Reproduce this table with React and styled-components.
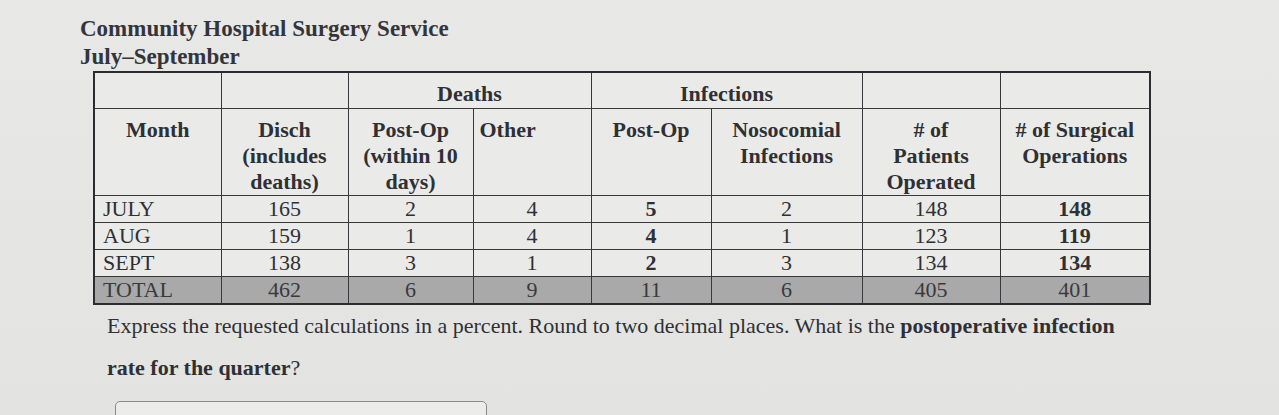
import React from "react";
import styled, { createGlobalStyle } from "styled-components";

const Global = createGlobalStyle`
  html, body { margin: 0; padding: 0; background: #e4e5e3; }
  body { font-family: "Liberation Serif", "Times New Roman", serif; color: #2f3034; overflow: hidden; }
`;

const Page = styled.div`
  width: 1279px;
  height: 415px;
  padding: 15px 0 0 80px;
  box-sizing: border-box;
  background: linear-gradient(180deg, #e8e9e7 0%, #e3e4e2 100%);
`;

const Title = styled.div`
  font-size: 23px;
  font-weight: bold;
  line-height: 28px;
  color: #34353a;
`;

const Table = styled.table`
  margin: 0 0 0 13px;
  border-collapse: collapse;
  table-layout: fixed;
  width: 1056px;
  background: #eaebe9;
  border: 2px solid #2c2c30;
`;

const Cell = styled.td`
  border: 1.5px solid #38383c;
  padding: ${(p) => (p.$head ? "8px 6px 0" : "0 8px")};
  height: ${(p) => p.$h}px;
  box-sizing: border-box;
  font-size: 22px;
  line-height: ${(p) => (p.$head ? "26px" : "24px")};
  font-weight: ${(p) => (p.$bold ? "bold" : "normal")};
  text-align: ${(p) => p.$align || "center"};
  vertical-align: ${(p) => (p.$head ? "top" : "middle")};
  background: ${(p) => (p.$total ? "#a8a9a8" : "transparent")};
  color: ${(p) => (p.$total ? "#3a3a3e" : "#2f3034")};
  white-space: nowrap;
`;

const Question = styled.div`
  margin: 0 0 0 27px;
  width: 1040px;
  font-size: 22px;
  line-height: 42px;
  color: #2f3034;
`;

const Phrase = styled.span`
  font-weight: ${(p) => (p.$bold ? "bold" : "normal")};
`;

const AnswerBox = styled.div`
  margin: 12px 0 0 35px;
  width: 370px;
  height: 30px;
  border: 1.5px solid #8a8b8d;
  border-radius: 5px;
  background: #ecedeb;
`;

const widths = [127, 127, 125, 118, 120, 151, 138, 150];

const rows = [
  { m: "JULY", v: ["165", "2", "4", "5", "2", "148", "148"] },
  { m: "AUG", v: ["159", "1", "4", "4", "1", "123", "119"] },
  { m: "SEPT", v: ["138", "3", "1", "2", "3", "134", "134"] },
];

const boldCols = [3, 6];

export default function App() {
  return (
    <>
      <Global />
      <Page>
        <Title>Community Hospital Surgery Service</Title>
        <Title>July–September</Title>
        <Table>
          <colgroup>
            {widths.map((w, i) => (
              <col key={i} style={{ width: w }} />
            ))}
          </colgroup>
          <tbody>
            <tr>
              <Cell as="th" $head $h={36} />
              <Cell as="th" $head $h={36} />
              <Cell as="th" $head $bold $h={36} colSpan={2}>Deaths</Cell>
              <Cell as="th" $head $bold $h={36} colSpan={2}>Infections</Cell>
              <Cell as="th" $head $h={36} />
              <Cell as="th" $head $h={36} />
            </tr>
            <tr>
              <Cell as="th" $head $bold $h={84}>Month</Cell>
              <Cell as="th" $head $bold $h={84}>Disch<br />(includes<br />deaths)</Cell>
              <Cell as="th" $head $bold $h={84}>Post-Op<br />(within 10<br />days)</Cell>
              <Cell as="th" $head $bold $h={84} $align="left">Other</Cell>
              <Cell as="th" $head $bold $h={84}>Post-Op</Cell>
              <Cell as="th" $head $bold $h={84}>Nosocomial<br />Infections</Cell>
              <Cell as="th" $head $bold $h={84}># of<br />Patients<br />Operated</Cell>
              <Cell as="th" $head $bold $h={84}># of Surgical<br />Operations</Cell>
            </tr>
            {rows.map((r) => (
              <tr key={r.m}>
                <Cell $h={27} $align="left">{r.m}</Cell>
                {r.v.map((v, i) => (
                  <Cell key={i} $h={27} $bold={boldCols.includes(i)}>{v}</Cell>
                ))}
              </tr>
            ))}
            <tr>
              <Cell $h={28} $total $align="left">TOTAL</Cell>
              {["462", "6", "9", "11", "6", "405", "401"].map((v, i) => (
                <Cell key={i} $h={28} $total>{v}</Cell>
              ))}
            </tr>
          </tbody>
        </Table>
        <Question>
          <Phrase>Express the requested calculations in a percent. Round to two decimal places. What is the </Phrase>
          <Phrase $bold>postoperative infection</Phrase>{" "}
          <Phrase $bold>rate for the quarter</Phrase>
          <Phrase>?</Phrase>
        </Question>
        <AnswerBox />
      </Page>
    </>
  );
}
